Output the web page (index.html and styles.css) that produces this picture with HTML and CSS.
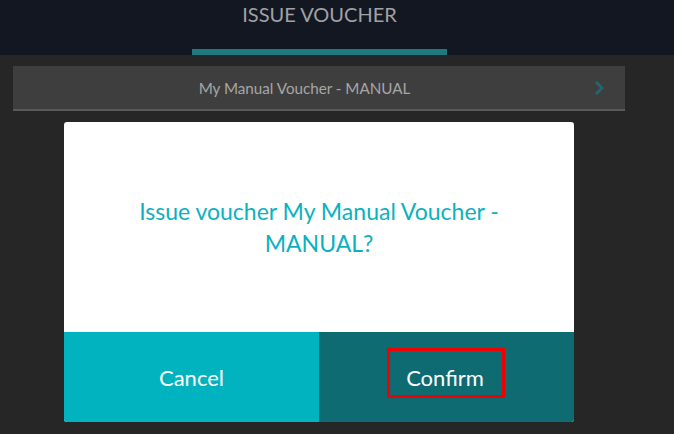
FILE: index.html
```html
<!DOCTYPE html>
<html>
<head>
<meta charset="utf-8">
<link rel="stylesheet" href="styles.css">
</head>
<body>
<header class="topbar">
  <div class="tab">
    <span class="tab-label">ISSUE VOUCHER</span>
  </div>
</header>
<main class="content">
  <div class="selector">
    <span class="selector-label">My Manual Voucher - MANUAL</span>
    <svg class="chevron" width="10" height="16" viewBox="0 0 10 16"><path d="M2 2 L8 8 L2 14" fill="none" stroke="#1e6a72" stroke-width="2.6"/></svg>
  </div>
  <div class="overlay">
    <div class="modal">
      <div class="modal-body">
        <p class="question">Issue voucher My Manual Voucher -<br>MANUAL?</p>
      </div>
      <div class="actions">
        <button class="btn btn-cancel">Cancel</button>
        <button class="btn btn-confirm"><span class="highlight">Confirm</span></button>
      </div>
    </div>
  </div>
</main>
</body>
</html>
```
FILE: styles.css
```css
* { box-sizing: border-box; }
html, body {
  margin: 0;
  padding: 0;
  width: 674px;
  height: 434px;
  overflow: hidden;
  background: #262626;
  font-family: Lato, "Open Sans", sans-serif;
}
.topbar {
  height: 55px;
  background: #131722;
  display: flex;
  justify-content: flex-start;
  padding-left: 192px;
}
.tab {
  width: 255px;
  height: 55px;
  display: flex;
  flex-direction: column;
  align-items: center;
  border-bottom: 6px solid #1e7a80;
}
.tab-label {
  color: #a0a2a6;
  font-size: 20px;
  line-height: 28px;
}
.content {
  padding: 11px 49px 0 13px;
}
.selector {
  height: 45px;
  background: #3e3e3e;
  border-bottom: 2px solid #5a5a5a;
  display: flex;
  align-items: center;
  justify-content: center;
  position: relative;
}
.selector-label {
  color: #a6a6a6;
  font-size: 15.2px;
  margin-left: -29px;
  margin-top: 1px;
}
.chevron {
  position: absolute;
  right: 21px;
  top: 14px;
}
.overlay {
  padding: 11px 51px 0 51px;
}
.modal {
  width: 510px;
  height: 300px;
  border-radius: 3px;
  overflow: hidden;
  background: #fff;
  display: flex;
  flex-direction: column;
}
.modal-body {
  height: 210px;
  display: flex;
  align-items: center;
  justify-content: center;
}
.question {
  margin: 0;
  text-align: center;
  color: #0bb1c0;
  font-size: 23px;
  line-height: 32px;
}
.actions {
  display: flex;
  height: 90px;
}
.btn {
  flex: 1;
  border: none;
  margin: 0;
  padding: 0;
  font-family: Lato, "Open Sans", sans-serif;
  font-size: 22px;
  color: #fff;
  display: flex;
  align-items: center;
  justify-content: center;
}
.btn-cancel { background: #00b3bf; }
.btn-confirm { background: #0d6b71; }
.highlight {
  position: relative;
  margin-left: -3px;
}
.highlight::after {
  content: "";
  position: absolute;
  left: -19px;
  right: -21px;
  top: -16px;
  bottom: -7px;
  border: 3px solid #f00000;
}
```
